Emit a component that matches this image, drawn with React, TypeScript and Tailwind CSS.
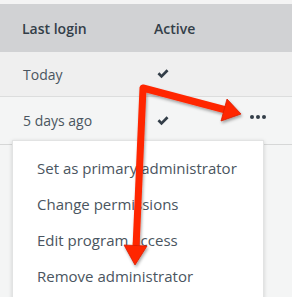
const menuItems = [
	"Set as primary administrator",
	"Change permissions",
	"Edit program access",
	"Remove administrator",
];

const CheckMark = () => (
	<svg width="12" height="10" viewBox="0 0 12 10" className="text-[#333e48]">
		<path d="M0.5 5.2 L2.4 3.3 L4.5 5.4 L9.6 0.3 L11.5 2.2 L4.5 9.2 Z" fill="currentColor" />
	</svg>
);

export default function App() {
	return (
		<div
			className="relative h-[297px] w-[292px] overflow-hidden bg-[#f4f5f5] text-[#333e48]"
			style={{ fontFamily: '"Open Sans", "Liberation Sans", sans-serif' }}
		>
			<div className="h-1 bg-[#f4f4f4]" />
			{/* 헤더 */}
			<div className="flex h-12 items-center bg-[#d1d2d4] text-[14px] font-semibold">
				<div className="w-[154px] pl-[22px]">Last login</div>
				<div>Active</div>
			</div>
			{/* 첫 번째 줄 */}
			<div className="flex h-[45px] items-center border-b border-[#dcdddd] bg-[#efefef] text-[14px] text-[#4a5560]">
				<div className="w-[157px] pl-[23px]">Today</div>
				<CheckMark />
			</div>
			{/* 두 번째 줄 */}
			<div className="flex h-12 items-center border-b border-[#d6d7d7] text-[14px] text-[#4a5560]">
				<div className="w-[157px] pl-[23px]">5 days ago</div>
				<CheckMark />
				<div className="ml-auto mr-[26px] flex gap-[2px] pb-2">
					<span className="h-[4px] w-[4px] rounded-full bg-[#333e48]" />
					<span className="h-[4px] w-[4px] rounded-full bg-[#333e48]" />
					<span className="h-[4px] w-[4px] rounded-full bg-[#333e48]" />
				</div>
			</div>

			{/* 드롭다운 메뉴 */}
			<div className="absolute left-3 top-[140px] h-[170px] w-[252px] border border-[#e2e3e3] bg-white pt-[9px] shadow-[0_1px_4px_rgba(0,0,0,0.15)]">
				{menuItems.map((item) => (
					<div
						key={item}
						className="flex h-9 items-center pl-6 text-[15px] text-[#4a5560]"
					>
						{item}
					</div>
				))}
			</div>

			{/* 빨간 화살표 */}
			<svg
				className="pointer-events-none absolute left-0 top-0"
				width="292"
				height="297"
				viewBox="0 0 292 297"
			>
				<defs>
					<filter id="shadow" x="-20%" y="-20%" width="140%" height="140%">
						<feDropShadow dx="1" dy="2" stdDeviation="1.5" floodColor="#000" floodOpacity="0.35" />
					</filter>
				</defs>
				<g filter="url(#shadow)" fill="#ff2600" stroke="#d81e00" strokeWidth="0.8">
					<polyline
						points="226,110 143,88 136,248"
						fill="none"
						stroke="#ff2600"
						strokeWidth="7"
						strokeLinejoin="round"
						strokeLinecap="round"
					/>
					<polygon points="241,114 227,99 221,121" />
					<polygon points="135,265 147,246 124,245" />
				</g>
			</svg>
		</div>
	);
}
